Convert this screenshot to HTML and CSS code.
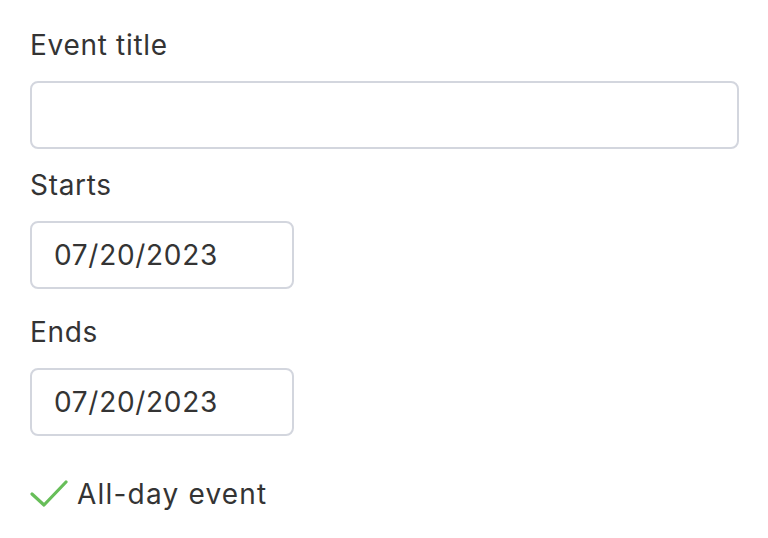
FILE: index.html
```html
<!DOCTYPE html>
<html lang="en">
<head>
<meta charset="utf-8">
<title>Event form</title>
<link rel="stylesheet" href="styles.css">
</head>
<body>
<form class="form">
  <div class="field field-title">
    <label class="label" for="title">Event title</label>
    <input class="input input-wide" id="title" type="text" value="">
  </div>
  <div class="field field-start">
    <label class="label" for="start">Starts</label>
    <input class="input input-date" id="start" type="text" value="07/20/2023">
  </div>
  <div class="field field-end">
    <label class="label" for="end">Ends</label>
    <input class="input input-date" id="end" type="text" value="07/20/2023">
  </div>
  <div class="check-row">
    <svg class="check-icon" width="38" height="28" viewBox="0 0 38 28" aria-hidden="true">
      <polyline points="2,14 14,25 36,2" fill="none" stroke="#67be59" stroke-width="3.2" stroke-linecap="round" stroke-linejoin="round"/>
    </svg>
    <span class="check-label">All-day event</span>
  </div>
</form>
</body>
</html>
```
FILE: styles.css
```css
html, body {
  margin: 0;
  padding: 0;
  background: #ffffff;
}
body {
  font-family: Inter, "Noto Sans", sans-serif;
  color: #343434;
}
.form {
  padding: 27px 30px 0 30px;
  display: flex;
  flex-direction: column;
}
.field {
  display: flex;
  flex-direction: column;
  align-items: flex-start;
}
.field-title { margin-bottom: 18px; }
.field-start { margin-bottom: 25px; }
.field-end { margin-bottom: 40px; }
.label {
  font-size: 28px;
  letter-spacing: 0.7px;
  line-height: 36px;
  margin-bottom: 18px;
  color: #343434;
}
.input {
  box-sizing: border-box;
  height: 68px;
  border: 2px solid #d3d6de;
  border-radius: 8px;
  background: #fff;
  font-family: inherit;
  font-size: 28px;
  letter-spacing: 0.7px;
  color: #343434;
  padding: 0 22px;
  margin: 0;
  outline: none;
}
.input-wide { width: 709px; }
.input-date { width: 264px; }
.check-row {
  display: flex;
  align-items: center;
  gap: 9px;
  height: 36px;
}
.check-icon {
  display: block;
}
.check-label {
  font-size: 28px;
  letter-spacing: 1.2px;
  line-height: 36px;
}
```
